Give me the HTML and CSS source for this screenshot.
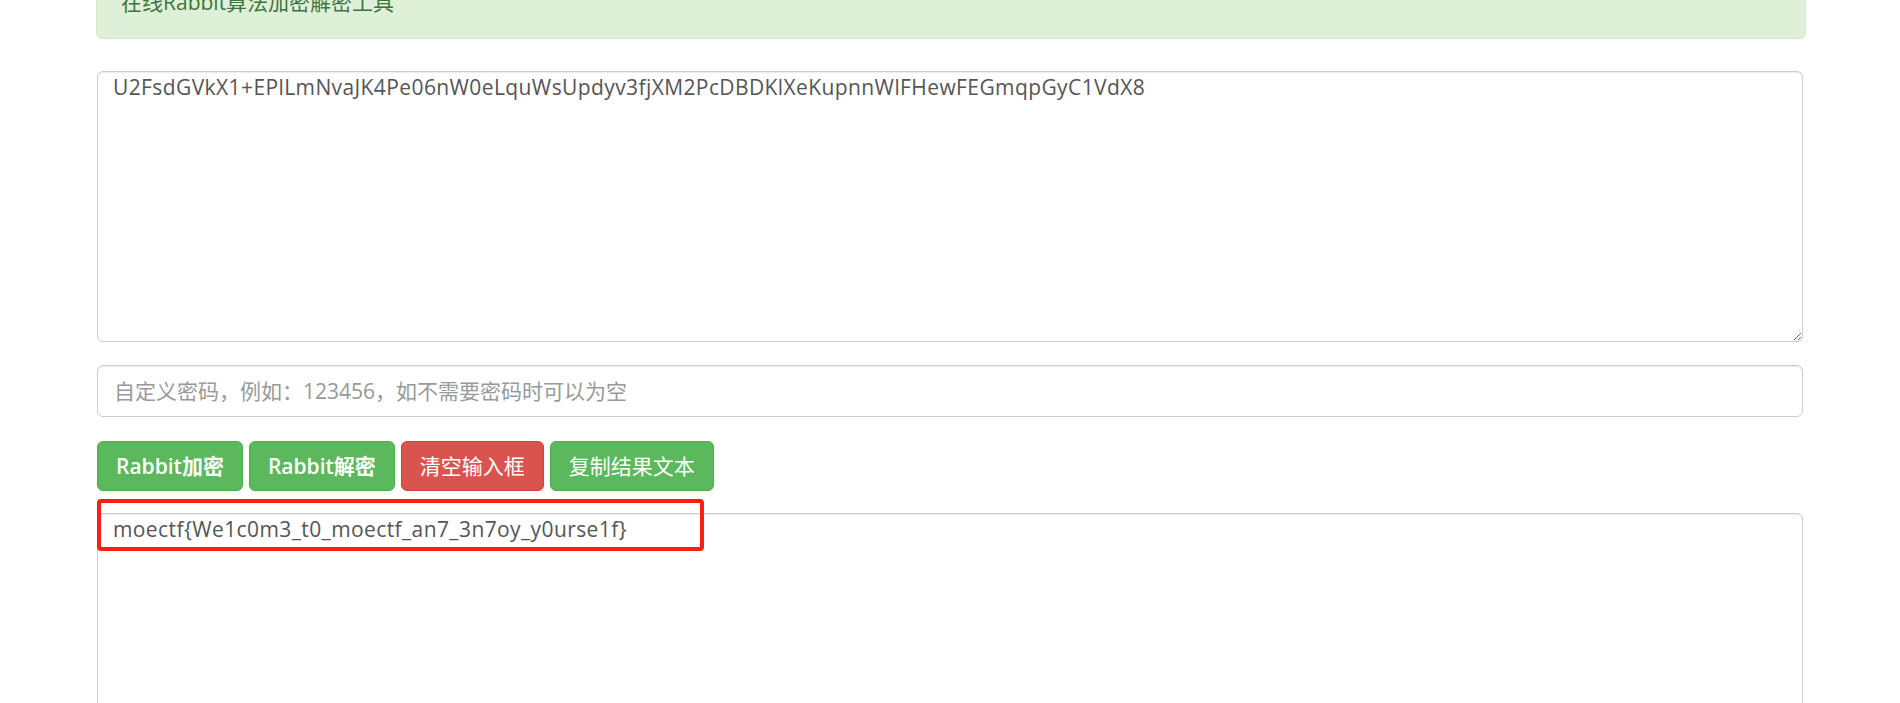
FILE: index.html
```html
<!DOCTYPE html>
<html lang="zh-CN">
<head>
<meta charset="utf-8">
<title>在线Rabbit算法加密解密工具</title>
<link rel="stylesheet" href="styles.css">
</head>
<body>
<div class="page">
  <div class="alert">在线Rabbit算法加密解密工具</div>
  <div class="form">
    <textarea class="field area">U2FsdGVkX1+EPlLmNvaJK4Pe06nW0eLquWsUpdyv3fjXM2PcDBDKlXeKupnnWlFHewFEGmqpGyC1VdX8</textarea>
    <input class="field input" type="text" placeholder="自定义密码，例如：123456，如不需要密码时可以为空">
    <div class="btns">
      <button class="btn ok strong">Rabbit加密</button>
      <button class="btn ok strong">Rabbit解密</button>
      <button class="btn danger">清空输入框</button>
      <button class="btn ok">复制结果文本</button>
    </div>
    <div class="out">
      <textarea class="field area">moectf{We1c0m3_t0_moectf_an7_3n7oy_y0urse1f}</textarea>
      <div class="mark"></div>
    </div>
  </div>
</div>
</body>
</html>
```
FILE: styles.css
```css
html, body {
  margin: 0;
  padding: 0;
  background: #fff;
  overflow: hidden;
}
body {
  font-family: "Open Sans", "Noto Sans CJK SC", sans-serif;
  font-size: 21px;
  color: #555;
}
.page {
  margin-top: -39px;
  padding-left: 96px;
  width: 1710px;
}
.alert {
  box-sizing: border-box;
  height: 78px;
  padding: 25px 24px 21px;
  line-height: 30px;
  background: #dff0d8;
  border: 1px solid #d6e9c6;
  border-radius: 6px;
  color: #3c763d;
}
.form {
  margin: 32px 0 0 1px;
  width: 1706px;
  display: flex;
  flex-direction: column;
}
.field {
  box-sizing: border-box;
  width: 100%;
  border: 1px solid #ccc;
  border-radius: 6px;
  box-shadow: inset 0 1px 1px rgba(0,0,0,.075);
  font: inherit;
  color: #555;
  background: #fff;
  outline: none;
}
.area {
  height: 271px;
  padding: 3px 15px;
  line-height: 24px;
  letter-spacing: 0.4px;
  display: block;
}
.input {
  margin-top: 23px;
  height: 52px;
  padding: 0 16px;
}
.input::placeholder {
  color: #999;
}
.btns {
  margin-top: 24px;
  display: flex;
  gap: 6px;
}
.btn {
  box-sizing: border-box;
  height: 50px;
  padding: 0 18px;
  font: inherit;
  color: #fff;
  border-radius: 6px;
  line-height: 30px;
}
.strong {
  font-weight: 600;
}
.ok {
  background: #5cb85c;
  border: 1px solid #4cae4c;
}
.danger {
  background: #d9534f;
  border: 1px solid #d43f3a;
}
.out {
  margin-top: 22px;
  position: relative;
}
.mark {
  position: absolute;
  left: 0;
  top: -14px;
  width: 607px;
  height: 52px;
  box-sizing: border-box;
  border: 4px solid #fa1e14;
  border-radius: 4px;
}
```
